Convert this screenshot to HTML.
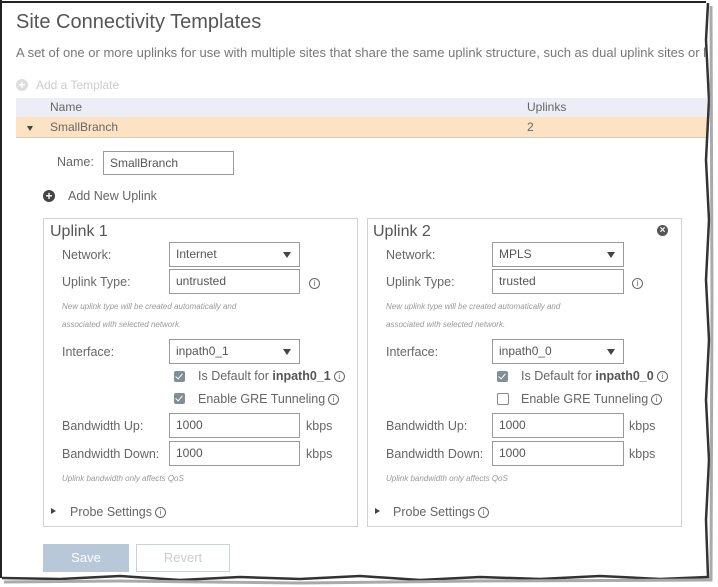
<!DOCTYPE html><html><head><style>
body{margin:0;width:718px;height:587px;background:#fff;position:relative;overflow:hidden;font-family:"Liberation Sans",sans-serif;color:#555}
.a{position:absolute;white-space:nowrap}
.lbl{font-size:12.5px;color:#666}
.inp{position:absolute;border:1px solid #999;background:#fff;height:23px;box-sizing:border-box;font-size:12px;color:#555;padding:4px 6px}
.sel::after{content:"";position:absolute;right:8px;top:9px;border-left:4px solid transparent;border-right:4px solid transparent;border-top:6px solid #444}
.box{position:absolute;border:1px solid #cfd3d6;box-sizing:border-box;width:315px;height:309px;top:218px}
.hint{font-size:8px;font-style:italic;color:#999}
.cb{position:absolute;width:11px;height:11px;border-radius:2px;background:#7f8f94}
.cb::after{content:"";position:absolute;left:3px;top:1px;width:3px;height:6px;border:solid #fff;border-width:0 1.5px 1.5px 0;transform:rotate(40deg)}
.cbo{position:absolute;width:10px;height:10px;border:1px solid #888;border-radius:2px;background:#fff}
.i{display:inline-block;width:9px;height:9px;border:1px solid #666;border-radius:50%;font-size:8px;line-height:9px;text-align:center;color:#666;vertical-align:1px;margin-left:3px;font-style:normal}
</style></head><body>
<div class="a" style="left:0;top:0;width:2px;height:580px;background:#222"></div>
<div class="a" style="left:0;top:1px;width:706px;height:2px;background:#222"></div>
<div class="a" style="left:16px;top:11px;font-size:20px;color:#555">Site Connectivity Templates</div>
<div class="a" style="left:16px;top:45px;font-size:13px;color:#777">A set of one or more uplinks for use with multiple sites that share the same uplink structure, such as dual uplink sites or l</div>
<div class="a" style="left:16px;top:79px;width:12px;height:12px;border-radius:50%;background:#ddd;color:#fff;font-size:12px;line-height:12px;text-align:center;font-weight:bold">+</div>
<div class="a" style="left:36px;top:78px;font-size:12px;color:#ccc">Add a Template</div>
<div class="a" style="left:16px;top:98px;width:692px;height:19px;background:#edeef5"></div>
<div class="a" style="left:16px;top:117px;width:692px;height:20px;background:#fde3c3;border-bottom:1px solid #d9cbb5"></div>
<div class="a" style="left:50px;top:100px;font-size:12px;color:#666">Name</div>
<div class="a" style="left:527px;top:100px;font-size:12px;color:#666">Uplinks</div>
<div class="a" style="left:27px;top:126px;border-left:3.5px solid transparent;border-right:3.5px solid transparent;border-top:5px solid #444"></div>
<div class="a" style="left:50px;top:120px;font-size:12px;color:#666">SmallBranch</div>
<div class="a" style="left:527px;top:120px;font-size:12px;color:#666">2</div>
<div class="a lbl" style="left:57px;top:155px">Name:</div>
<div class="inp" style="left:103px;top:151px;width:131px;height:24px">SmallBranch</div>
<div class="a" style="left:43px;top:190px;width:12px;height:12px;border-radius:50%;background:#444;color:#fff;font-size:12px;line-height:12px;text-align:center;font-weight:bold">+</div>
<div class="a lbl" style="left:68px;top:189px">Add New Uplink</div>

<div class="box" style="left:43px"></div>
<div class="box" style="left:367px"></div>

<div class="a" style="left:50px;top:223px;font-size:16px;color:#555">Uplink 1</div>
<div class="a" style="left:373px;top:223px;font-size:16px;color:#555">Uplink 2</div>
<div class="a" style="left:657px;top:225px;width:11px;height:11px;border-radius:50%;background:#555;color:#fff;font-size:10px;line-height:11px;text-align:center;font-weight:bold">×</div>

<div class="a lbl" style="left:62px;top:248px">Network:</div>
<div class="inp sel" style="left:169px;top:242px;width:131px;height:25px">Internet</div>
<div class="a lbl" style="left:62px;top:275px">Uplink Type:</div>
<div class="inp" style="left:169px;top:269px;width:131px;height:25px">untrusted</div>
<div class="a" style="left:306px;top:274px"><span class="i">i</span></div>
<div class="a hint" style="left:62px;top:302px">New uplink type will be created automatically and</div>
<div class="a hint" style="left:62px;top:320px">associated with selected network.</div>
<div class="a lbl" style="left:62px;top:345px">Interface:</div>
<div class="inp sel" style="left:169px;top:339px;width:131px;height:25px">inpath0_1</div>
<div class="cb" style="left:174px;top:371px"></div>
<div class="a lbl" style="left:198px;top:369px">Is Default for <b style="color:#555">inpath0_1</b><span class="i">i</span></div>
<div class="cb" style="left:174px;top:393px"></div>
<div class="a lbl" style="left:198px;top:392px">Enable GRE Tunneling<span class="i">i</span></div>
<div class="a lbl" style="left:62px;top:419px">Bandwidth Up:</div>
<div class="inp" style="left:169px;top:413px;width:131px;height:25px">1000</div>
<div class="a lbl" style="left:306px;top:419px">kbps</div>
<div class="a lbl" style="left:62px;top:447px">Bandwidth Down:</div>
<div class="inp" style="left:169px;top:441px;width:131px;height:25px">1000</div>
<div class="a lbl" style="left:306px;top:447px">kbps</div>
<div class="a hint" style="left:62px;top:474px">Uplink bandwidth only affects QoS</div>
<div class="a" style="left:51px;top:508px;border-top:3.5px solid transparent;border-bottom:3.5px solid transparent;border-left:5px solid #444"></div>
<div class="a lbl" style="left:70px;top:505px">Probe Settings<span class="i">i</span></div>

<div class="a lbl" style="left:386px;top:248px">Network:</div>
<div class="inp sel" style="left:492px;top:242px;width:132px;height:25px">MPLS</div>
<div class="a lbl" style="left:386px;top:275px">Uplink Type:</div>
<div class="inp" style="left:492px;top:269px;width:132px;height:25px">trusted</div>
<div class="a" style="left:629px;top:274px"><span class="i">i</span></div>
<div class="a hint" style="left:386px;top:302px">New uplink type will be created automatically and</div>
<div class="a hint" style="left:386px;top:320px">associated with selected network.</div>
<div class="a lbl" style="left:386px;top:345px">Interface:</div>
<div class="inp sel" style="left:492px;top:339px;width:132px;height:25px">inpath0_0</div>
<div class="cb" style="left:497px;top:371px"></div>
<div class="a lbl" style="left:521px;top:369px">Is Default for <b style="color:#555">inpath0_0</b><span class="i">i</span></div>
<div class="cbo" style="left:497px;top:393px"></div>
<div class="a lbl" style="left:521px;top:392px">Enable GRE Tunneling<span class="i">i</span></div>
<div class="a lbl" style="left:386px;top:419px">Bandwidth Up:</div>
<div class="inp" style="left:492px;top:413px;width:132px;height:25px">1000</div>
<div class="a lbl" style="left:629px;top:419px">kbps</div>
<div class="a lbl" style="left:386px;top:447px">Bandwidth Down:</div>
<div class="inp" style="left:492px;top:441px;width:132px;height:25px">1000</div>
<div class="a lbl" style="left:629px;top:447px">kbps</div>
<div class="a hint" style="left:386px;top:474px">Uplink bandwidth only affects QoS</div>
<div class="a" style="left:375px;top:508px;border-top:3.5px solid transparent;border-bottom:3.5px solid transparent;border-left:5px solid #444"></div>
<div class="a lbl" style="left:393px;top:505px">Probe Settings<span class="i">i</span></div>

<div class="a" style="left:43px;top:544px;width:86px;height:28px;background:#b8c8d8;color:#fff;font-size:13px;line-height:28px;text-align:center">Save</div>
<div class="a" style="left:136px;top:544px;width:94px;height:28px;box-sizing:border-box;border:1px solid #c8d2dc;color:#ccc;font-size:13px;line-height:26px;text-align:center">Revert</div>

<svg class="a" style="left:0;top:0" width="718" height="587">
<path d="M0 578 L60 579 L120 576 L180 580 L240 577 L300 579 L360 576 L420 580 L480 577 L540 579 L600 576 L660 579 L708 577 L706 520 L709 460 L706 400 L709 340 L706 280 L709 220 L706 160 L709 100 L706 40 L708 3 L718 3 L718 587 L0 587 Z" fill="#fff"/>
<path d="M2 578 L60 579 L120 576 L180 580 L240 577 L300 579 L360 576 L420 580 L480 577 L540 579 L600 576 L660 579 L708 577 L706 520 L709 460 L706 400 L709 340 L706 280 L709 220 L706 160 L709 100 L706 40 L708 3" fill="none" stroke="#333" stroke-width="2.5"/>
<path d="M4 582 L120 581 L300 583 L480 581 L711 580 L712 300 L711 6" fill="none" stroke="#aaa" stroke-width="3"/>
</svg>
</body></html>
